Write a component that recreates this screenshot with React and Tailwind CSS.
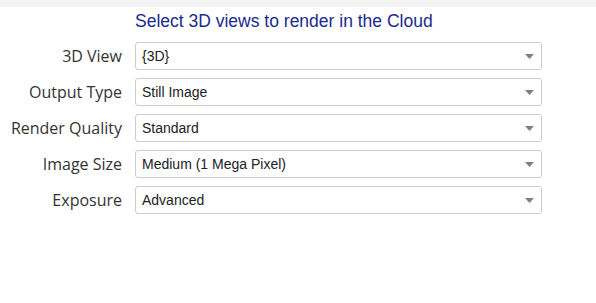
import React from 'react'

const rows = [
  { label: '3D View', value: '{3D}' },
  { label: 'Output Type', value: 'Still Image' },
  { label: 'Render Quality', value: 'Standard' },
  { label: 'Image Size', value: 'Medium (1 Mega Pixel)' },
  { label: 'Exposure', value: 'Advanced' }
]

function App() {
  return (
    <div className="w-[596px] h-[303px] bg-white">
      <div className="h-[7px] bg-[#f3f3f3]"></div>
      <div className="pl-[135px] pt-[3px] h-[35px] text-[17.5px] leading-[22px] text-[#1b2a8f] font-['Liberation_Sans',Arial,sans-serif]">
        Select 3D views to render in the Cloud
      </div>
      <div className="flex flex-col gap-[8px]">
        {rows.map(row => (
          <div key={row.label} className="flex items-center h-[28px]">
            <div className="w-[122px] text-right text-[16px] text-[#333] font-['Open_Sans',sans-serif]">
              {row.label}
            </div>
            <div className="ml-[13px] w-[407px] h-[28px] border border-[#ccc] rounded-[3px] flex items-center justify-between pl-[6px] pr-[6px]">
              <span className="text-[14px] text-[#222] font-['Liberation_Sans',Arial,sans-serif]">{row.value}</span>
              <svg width="9" height="5" viewBox="0 0 9 5" className="mr-[1px]">
                <path d="M0 0 L9 0 L4.5 5 Z" fill="#808080" />
              </svg>
            </div>
          </div>
        ))}
      </div>
    </div>
  )
}

export default App
